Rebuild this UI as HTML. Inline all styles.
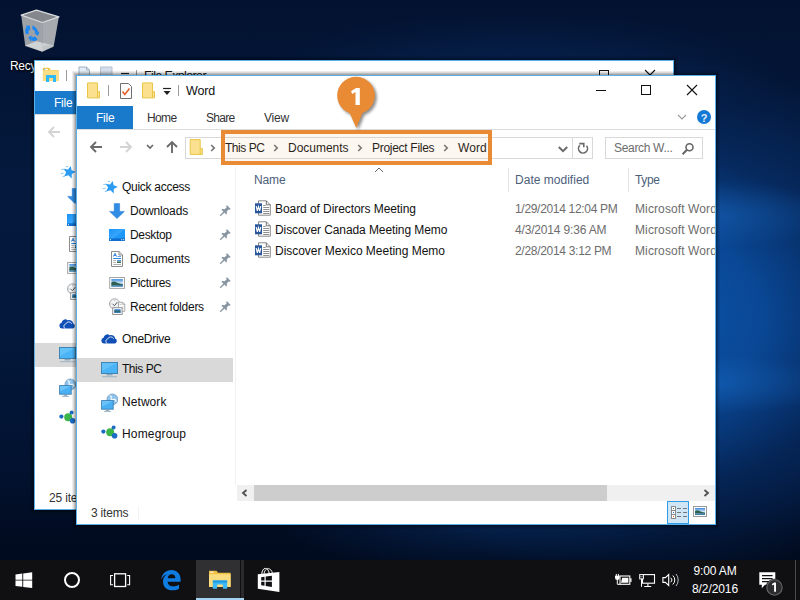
<!DOCTYPE html>
<html><head><meta charset="utf-8">
<style>
*{margin:0;padding:0;box-sizing:border-box}
html,body{width:800px;height:600px;overflow:hidden}
body{position:relative;font-family:"Liberation Sans",sans-serif;font-size:12px;color:#111;background:#03102b}
.abs{position:absolute}
.t{position:absolute;white-space:nowrap;line-height:16px;height:16px}
#bg{position:absolute;left:0;top:0;width:800px;height:600px;
 background:
 radial-gradient(ellipse 260px 60px at 520px 72px, rgba(8,44,98,.55), rgba(8,44,98,0) 100%),
 radial-gradient(ellipse 200px 52px at 480px 520px, rgba(8,44,98,.6), rgba(8,44,98,0) 100%),
 radial-gradient(ellipse 150px 34px at 700px 214px, rgba(30,120,215,.38), rgba(30,120,215,0) 100%),
 radial-gradient(ellipse 150px 30px at 700px 384px, rgba(30,120,215,.34), rgba(30,120,215,0) 100%),
 radial-gradient(ellipse 340px 265px at 640px 318px, rgba(12,88,178,.96) 0%, rgba(11,80,165,.86) 35%, rgba(8,56,124,.5) 65%, rgba(4,24,60,0) 100%),
 linear-gradient(180deg,#031230 0%,#04193d 30%,#03183c 55%,#021230 78%,#010c21 89%,#010a1d 100%);}
.win{position:absolute;background:#fff;border:1px solid #5cb0e9}
</style></head><body>
<div id="bg"></div>
<svg class="abs" style="left:0;top:0" width="0" height="0"><defs><linearGradient id="sky" x1="0" y1="0" x2="0" y2="1"><stop offset="0" stop-color="#3a8ae0"/><stop offset="0.55" stop-color="#dcecf6"/><stop offset="1" stop-color="#dcecf6"/></linearGradient></defs></svg>
<svg class="abs" style="left:18px;top:8px" width="44" height="46" viewBox="18 8 44 46">
 <path d="M21.200 15.200L36.500 10.200 58.900 16.800 42.250 22.500z" fill="#84888d"/>
 <path d="M21.200 15.200L42.250 22.500 42.250 51.800 25.200 46z" fill="#9ea2a7"/>
 <path d="M58.900 16.800L42.250 22.500 42.250 51.800 53.600 46.700z" fill="#a7abaf"/>
 <path d="M25.300 45.600L36.500 41.200 53.500 45.400 42.250 51.500z" fill="#d0d3d5"/>
 <path d="M42.250 46v5.500L53.500 45.400 50 44.600z" fill="#c2c5c8"/>
 <path d="M21.200 15.200L36.500 10.200 58.900 16.800 42.250 22.500z" fill="none" stroke="#d9dbdd" stroke-width="1.300" stroke-linejoin="round"/>
 <path d="M42.250 23v22" stroke="#b4b8bc" stroke-width="0.600"/>
 <g transform="matrix(0.95 0.30 0 1.08 32 33)"><path d="M0.47 -5.38A5.4 5.4 0 0 1 4.97 -2.11" stroke="#1a86f2" stroke-width="3.400" fill="none"/><path d="M6.30 1.02L7.73 -3.28L2.21 -0.94z" fill="#1a86f2"/><path d="M4.42 3.10A5.4 5.4 0 0 1 -0.66 5.36" stroke="#1a86f2" stroke-width="3.400" fill="none"/><path d="M-4.03 4.95L-1.02 8.34L-0.29 2.38z" fill="#1a86f2"/><path d="M-4.89 2.28A5.4 5.4 0 0 1 -4.31 -3.25" stroke="#1a86f2" stroke-width="3.400" fill="none"/><path d="M-2.27 -5.97L-6.71 -5.06L-1.92 -1.44z" fill="#1a86f2"/></g>
</svg>
<div class="t" id="rec" style="left:10px;top:58px;color:#fff;font-size:12px;text-shadow:1px 1px 2px #000,0 0 3px #000;letter-spacing:-0.31px">Recycle Bin</div>

<div class="win" id="bw" style="left:34px;top:60px;width:640px;height:450px;overflow:hidden;box-shadow:0 0 0 1px rgba(0,0,0,.133),0 0 0 2px rgba(0,0,0,.128),0 0 0 3px rgba(0,0,0,.075),0 0 0 4px rgba(0,0,0,.07)">
 <!-- coordinates relative to (35,61) -->
 <svg class="abs" style="left:7px;top:6px" width="18" height="16" viewBox="0 0 18 16"><path d="M0.900 0.800h6.300l1.500 2.200h8.300v10.900h-16.100z" fill="#f2c445"/><path d="M0.900 3.200h16.100v10.700h-16.100z" fill="#fbdd84"/><rect x="2" y="1.900" width="3.800" height="1" fill="#fff"/><rect x="2" y="1.900" width="1" height="1" fill="#35b6f2"/><path d="M4 15v-7h10v7h-3v-3.900h-3.800v3.900z" fill="#2fbaf5"/></svg>
 <div class="abs" style="left:31px;top:9px;width:1px;height:11px;background:#9a9a9a"></div>
 <svg class="abs" style="left:43px;top:5px" width="13" height="18" viewBox="0 0 13 18"><path d="M1 1h7.500l3 3v13h-10.500z" fill="#e4ecf5" stroke="#9fb0c4" stroke-width="1"/><path d="M8.500 1v3h3" fill="none" stroke="#9fb0c4" stroke-width="0.900"/></svg>
 <svg class="abs" style="left:65px;top:5px" width="13" height="18" viewBox="0 0 13 18"><path d="M0.500 1h11.500v16h-11.500z" fill="#d4deea" stroke="#b4c2d2" stroke-width="1"/></svg>
 <svg class="abs" style="left:85px;top:11px" width="10" height="9" viewBox="0 0 10 9"><path d="M1 1.500h8" stroke="#222" stroke-width="1.200"/><path d="M1.500 4h7l-3.500 4z" fill="#222"/></svg>
 <div class="abs" style="left:101px;top:9px;width:1px;height:11px;background:#9a9a9a"></div>
 <div class="t" id="bttl" style="left:109px;top:7px;font-size:12.500px;letter-spacing:-0.63px">File Explorer</div>
 <div class="abs" style="left:564px;top:9px;width:10px;height:10px;border:1px solid #111"></div>
 <svg class="abs" style="left:609px;top:8px" width="12" height="12" viewBox="0 0 12 12"><path d="M1 1l10 10M11 1L1 11" stroke="#111" stroke-width="1.100"/></svg>
 <div class="abs" style="left:0;top:30px;width:56px;height:23px;background:#1979ca"></div>
 <div class="t" id="brt0" style="left:19px;top:34px;color:#fff;letter-spacing:-0.21px">File</div>
 <div class="abs" style="left:0;top:53px;width:638px;height:1px;background:#dadbdc"></div>
 <svg class="abs" style="left:12px;top:64px" width="14" height="14" viewBox="0 0 14 14"><path d="M13 7H2M7 2L2 7l5 5" stroke="#d4d4d4" stroke-width="1.900" fill="none"/></svg>
 <div class="abs" style="left:0;top:282px;width:156px;height:24px;background:#d9d9d9"></div>
 <svg class="abs" style="left:25px;top:104px" width="16" height="14" viewBox="0 0 16 14"><path d="M10.8 0.9L11.6 5.3L15.8 6.8L11.8 8.9L11.7 13.4L8.5 10.3L4.1 11.5L6.1 7.5L3.6 3.8L8.0 4.4z" fill="#2b9cf2"/><path d="M1.300 4.600l3-0.400M0.700 8.700l2.800-0.500M2.600 11.700l2.400-0.800M5.800 1.700l2.400-0.300" stroke="#7cc3f8" stroke-width="0.900"/></svg>
 <svg class="abs" style="left:32px;top:127px" width="16" height="16" viewBox="0 0 16 16"><path d="M5.200 0.400h5.400v8h4.800L8 15.600 0.600 8.400H5.200z" fill="#2f8de6" stroke="#2579cf" stroke-width="0.500"/></svg>
 <svg class="abs" style="left:32px;top:153px" width="17" height="13" viewBox="0 0 17 13"><rect x="0" y="0" width="16" height="12" fill="url(#dg)"/><rect x="0" y="9.400" width="16" height="2.600" fill="#0f6dcf"/><rect x="1" y="10.200" width="1" height="1" fill="#fff"/></svg>
 <svg class="abs" style="left:34px;top:175px" width="13" height="17" viewBox="0 0 13 17"><path d="M0.500 0.500h7.500l3.500 3.500v11.500h-11z" fill="#fff" stroke="#8c8c8c" stroke-width="1"/><path d="M8 0.500v3.500h3.500" fill="none" stroke="#8c8c8c" stroke-width="1"/><path d="M2.300 5.600l1.800-3.400 1.300 3.400M2.800 4.500h2.400" stroke="#2b7fd9" stroke-width="0.900" fill="none"/><path d="M6.500 5.500h3.500" stroke="#4a9be8" stroke-width="0.900"/><path d="M2.200 7.500h7.800" stroke="#2b86e0" stroke-width="1"/><path d="M2.200 9.500h2.600M2.200 11.500h2.600M2.200 13.500h7.800" stroke="#a8a8a8" stroke-width="0.900"/><rect x="6" y="9" width="4" height="1.200" fill="#4a9be8"/><rect x="6" y="10.400" width="4" height="1.600" fill="#3f6f5a"/></svg>
 <svg class="abs" style="left:32px;top:201px" width="17" height="13" viewBox="0 0 17 13"><rect x="0.700" y="0.500" width="14.800" height="10.900" fill="#fff" stroke="#a4a4a4" stroke-width="1"/><rect x="2.300" y="2.100" width="11.600" height="7.700" fill="url(#sky)"/><path d="M2.300 5.600c1.500-1.400 3-1.600 4.500-0.600s4 1.800 7.100 2.100v1.200H2.300z" fill="#2f5f4d"/><path d="M2.300 8.100c4 0.300 8 0 11.600-0.500v2.200H2.300z" fill="#3f7fa8"/></svg>
 <svg class="abs" style="left:32px;top:222px" width="17" height="17" viewBox="0 0 17 17"><circle cx="5.600" cy="5.900" r="5.100" fill="#f1f3f4" stroke="#a3a9ad" stroke-width="1"/><path d="M5.600 1.800v1M5.600 9v1M1.500 5.900h1M8.700 5.900h1" stroke="#8e9498" stroke-width="0.700"/><path d="M3.600 6.200l2 1.400 2.600-3.400" stroke="#4f565a" stroke-width="1" fill="none"/><path d="M9.500 4.300h4.300l2 2v7H9.500z" fill="#fff" stroke="#a0a0a0" stroke-width="0.900"/><path d="M13.700 4.400v2h2" fill="none" stroke="#a0a0a0" stroke-width="0.800"/><path d="M10.600 6.300h2M13.600 8.500h1M13.600 10.500h1" stroke="#a8a8a8" stroke-width="0.800"/><rect x="3.700" y="9.700" width="9.400" height="6.700" fill="#fff" stroke="#8f8f8f" stroke-width="1"/><rect x="5.300" y="11.200" width="6.200" height="3.700" fill="#3a86dc"/><rect x="5.300" y="12.600" width="6.200" height="1.200" fill="#2f5f4d"/><rect x="5.300" y="13.800" width="6.200" height="1.100" fill="#3f7fa8"/></svg>
 <svg class="abs" style="left:24px;top:257px" width="17" height="11" viewBox="0 0 17 11"><path d="M3.200 10.600a3 3 0 0 1-0.600-5.900 3.600 3.600 0 0 1 6-2.400 4 4 0 0 1 5.600 3.200 2.700 2.700 0 0 1-0.400 5.100z" fill="#0f4fb6"/><path d="M6.400 10.600a2.400 2.400 0 0 1 0.300-4.600 3.300 3.300 0 0 1 6-0.300" stroke="#fff" stroke-width="0.800" fill="none"/></svg>
 <svg class="abs" style="left:24px;top:286px" width="17" height="16" viewBox="0 0 17 16"><rect x="0.500" y="0.500" width="16" height="11" fill="#4bb4f6" stroke="#3f86b4" stroke-width="1"/><path d="M1 1h15L1 9z" fill="#6cc6fa" opacity=".7"/><rect x="5.500" y="12" width="6" height="1.400" fill="#8aa7bb"/><rect x="1" y="14.200" width="15" height="1" fill="#9fb4c4"/></svg>
 <svg class="abs" style="left:24px;top:317px" width="17" height="20" viewBox="0 0 17 20"><circle cx="11.400" cy="6.400" r="5.400" fill="#8fc3eb" stroke="#5e8fb8" stroke-width="0.700"/><path d="M8.600 2.600c1.500 0.300 2.200 1.500 1.600 2.600s0.800 1.800 2.400 1.200 2.600 0.600 2.200 2.400" stroke="#e9f4fb" stroke-width="1.300" fill="none"/><rect x="0.600" y="7.600" width="11.600" height="8.600" fill="#49b0f4" stroke="#3b7fb0" stroke-width="0.900"/><path d="M1 8h10.800L1 13.500z" fill="#7acbfb" opacity=".7"/><rect x="4.700" y="16.800" width="3.600" height="1" fill="#7d9cb3"/><rect x="3" y="18" width="7" height="0.900" fill="#9fb4c4"/></svg>
 <svg class="abs" style="left:24px;top:349px" width="17" height="15" viewBox="0 0 17 15"><path d="M9 7l4-4.200M9 7l4.600 3.800" stroke="#1b64b8" stroke-width="1"/><circle cx="2.400" cy="6.600" r="2.100" fill="#1d6cc4"/><circle cx="9.200" cy="7.200" r="4" fill="#3bb54a"/><circle cx="12.600" cy="2.600" r="2" fill="#1d6cc4"/><circle cx="13.600" cy="10.800" r="2.800" fill="#1d6cc4"/></svg>
 <div class="t" id="bst" style="left:14px;top:429px;color:#333;letter-spacing:-0.17px">25 items</div>
</div>

<div class="win" id="fw" style="left:76px;top:75px;width:640px;height:450px;box-shadow:0 0 0 1px rgba(0,0,0,.133),0 0 0 2px rgba(0,0,0,.128),0 0 0 3px rgba(0,0,0,.075),0 0 0 4px rgba(0,0,0,.07)">
 <!-- coordinates inside are relative to (77,76) -->
 <!-- title bar icons -->
 <svg class="abs" style="left:9px;top:5px" width="16" height="20" viewBox="0 0 16 20"><path d="M1.500 1.900H11.500V10.600H13.500V16.900H1.500z" fill="#fbe18f" stroke="#e9c646" stroke-width="1"/><path d="M11.500 10.600V16.900" stroke="#e9c646" stroke-width="1" fill="none"/></svg>
 <div class="abs" style="left:31px;top:9px;width:1px;height:11px;background:#9a9a9a"></div>
 <svg class="abs" style="left:42px;top:6px" width="14" height="18" viewBox="0 0 14 18"><path d="M1.5 1.5h8l3 3v12h-11z" fill="#fdfdfd" stroke="#6f6f6f" stroke-width="1"/><path d="M3.5 9.5l2.3 3 4.7-6" stroke="#e8602c" stroke-width="1.6" fill="none"/></svg>
 <svg class="abs" style="left:64px;top:5px" width="16" height="20" viewBox="0 0 16 20"><path d="M1.500 1.900H11.500V10.600H13.500V16.900H1.500z" fill="#fbe18f" stroke="#e9c646" stroke-width="1"/><path d="M11.500 10.600V16.900" stroke="#e9c646" stroke-width="1" fill="none"/></svg>
 <svg class="abs" style="left:85px;top:11px" width="10" height="9" viewBox="0 0 10 9"><path d="M1 1.5h8" stroke="#222" stroke-width="1.2"/><path d="M1.5 4h7l-3.5 4z" fill="#222"/></svg>
 <div class="abs" style="left:101px;top:9px;width:1px;height:11px;background:#9a9a9a"></div>
 <div class="t" id="ttl" style="left:109px;top:7px;font-size:12.5px;letter-spacing:-0.16px">Word</div>
 <!-- window controls -->
 <div class="abs" style="left:519px;top:14px;width:10px;height:1px;background:#111"></div>
 <div class="abs" style="left:564px;top:9px;width:10px;height:10px;border:1px solid #111"></div>
 <svg class="abs" style="left:609px;top:8px" width="12" height="12" viewBox="0 0 12 12"><path d="M1 1l10 10M11 1L1 11" stroke="#111" stroke-width="1.1"/></svg>
 <!-- ribbon tabs -->
 <div class="abs" style="left:0;top:30px;width:56px;height:23px;background:#1979ca"></div>
 <div class="t" id="rt0" style="left:19px;top:34px;color:#fff;letter-spacing:-0.21px">File</div>
 <div class="t" id="rt1" style="left:70px;top:34px;color:#333;letter-spacing:-0.63px">Home</div>
 <div class="t" id="rt2" style="left:129px;top:34px;color:#333;letter-spacing:-0.71px">Share</div>
 <div class="t" id="rt3" style="left:187px;top:34px;color:#333;letter-spacing:-0.2px">View</div>
 <svg class="abs" style="left:600px;top:38px" width="10" height="7" viewBox="0 0 10 7"><path d="M1 1l4 4 4-4" stroke="#9c9c9c" stroke-width="1.200" fill="none"/></svg>
 <div class="abs" style="left:620px;top:34px;width:14px;height:14px;border-radius:7px;background:#1478d4"></div>
 <div class="t" style="left:620px;top:33.500px;width:14px;text-align:center;color:#e2effb;font-weight:bold;font-size:11px">?</div>
 <div class="abs" style="left:0;top:53px;width:638px;height:1px;background:#dadbdc"></div>
 <!-- nav buttons -->
 <svg class="abs" style="left:12px;top:64px" width="14" height="14" viewBox="0 0 14 14"><path d="M13 7H2M7 2L2 7l5 5" stroke="#6a6a6a" stroke-width="1.900" fill="none"/></svg>
 <svg class="abs" style="left:42px;top:64px" width="14" height="14" viewBox="0 0 14 14"><path d="M1 7h11M7 2l5 5-5 5" stroke="#d4d4d4" stroke-width="1.900" fill="none"/></svg>
 <svg class="abs" style="left:69px;top:68px" width="8" height="6" viewBox="0 0 8 6"><path d="M1 1l3 3 3-3" stroke="#6a6a6a" stroke-width="1.700" fill="none"/></svg>
 <svg class="abs" style="left:88px;top:64px" width="14" height="14" viewBox="0 0 14 14"><path d="M7 13V2M2 7l5-5 5 5" stroke="#6a6a6a" stroke-width="1.900" fill="none"/></svg>
 <!-- address bar -->
 <div class="abs" style="left:108px;top:61px;width:408px;height:22px;border:1px solid #d9d9d9;background:#fff"></div>
 <svg class="abs" style="left:112px;top:62px" width="15" height="18" viewBox="0 0 15 18"><path d="M1.200 1.600H11.200V10.500H13.300V16.400H1.200z" fill="#fbe18f" stroke="#e9c646" stroke-width="1"/><path d="M11.200 10.500V16.400" stroke="#e9c646" stroke-width="1" fill="none"/></svg>
 <svg class="abs ch" style="left:133px;top:68px" width="6" height="8" viewBox="0 0 6 8"><path d="M1.200 1l3 3-3 3" stroke="#727272" stroke-width="1.700" fill="none"/></svg>
 <div class="t" id="a0" style="left:148px;top:64px;letter-spacing:-0.46px">This PC</div>
 <svg class="abs ch" style="left:196px;top:68px" width="6" height="8" viewBox="0 0 6 8"><path d="M1.200 1l3 3-3 3" stroke="#727272" stroke-width="1.700" fill="none"/></svg>
 <div class="t" id="a1" style="left:211px;top:64px;letter-spacing:-0.02px">Documents</div>
 <svg class="abs ch" style="left:280px;top:68px" width="6" height="8" viewBox="0 0 6 8"><path d="M1.200 1l3 3-3 3" stroke="#727272" stroke-width="1.700" fill="none"/></svg>
 <div class="t" id="a2" style="left:295px;top:64px;letter-spacing:-0.29px">Project Files</div>
 <svg class="abs ch" style="left:366px;top:68px" width="6" height="8" viewBox="0 0 6 8"><path d="M1.200 1l3 3-3 3" stroke="#727272" stroke-width="1.700" fill="none"/></svg>
 <div class="t" id="a3" style="left:381px;top:64px;letter-spacing:0.06px">Word</div>
 <svg class="abs" style="left:481px;top:70px" width="10" height="7" viewBox="0 0 10 7"><path d="M0.800 1l4.200 4.200L9.200 1" stroke="#6a6a6a" stroke-width="2" fill="none"/></svg>
 <div class="abs" style="left:495px;top:62px;width:1px;height:20px;background:#d9d9d9"></div>
 <svg class="abs" style="left:500px;top:66px" width="12" height="13" viewBox="0 0 12 13"><path d="M9.500 3.700A4.500 4.500 0 1 1 2.800 3.400" stroke="#6a6a6a" stroke-width="1.600" fill="none"/><path d="M2.300 1.600H6.800V5.200" stroke="#6a6a6a" stroke-width="1.600" fill="none"/></svg>
 <!-- search box -->
 <div class="abs" style="left:528px;top:61px;width:98px;height:22px;border:1px solid #d9d9d9;background:#fff"></div>
 <div class="t" id="srch" style="left:537px;top:64px;color:#6d6d6d;letter-spacing:-0.32px">Search W...</div>
 <svg class="abs" style="left:604px;top:66px" width="14" height="14" viewBox="0 0 14 14"><circle cx="8.500" cy="5.200" r="3.500" stroke="#666" stroke-width="1.600" fill="none"/><path d="M6 7.800L1.600 12.200" stroke="#666" stroke-width="2"/></svg>
 <!-- sidebar : coordinates relative to (77,76) -->
 <div class="abs" style="left:0;top:282px;width:156px;height:24px;background:#d9d9d9"></div>
 <div class="abs" style="left:158px;top:90px;width:1px;height:319px;background:#f2f2f2"></div>
 <!-- quick access star -->
 <svg class="abs" style="left:25px;top:104px" width="16" height="14" viewBox="0 0 16 14"><path d="M10.8 0.9L11.6 5.3L15.8 6.8L11.8 8.9L11.7 13.4L8.5 10.3L4.1 11.5L6.1 7.5L3.6 3.8L8.0 4.4z" fill="#2b9cf2"/><path d="M1.300 4.600l3-0.400M0.700 8.700l2.800-0.500M2.600 11.700l2.400-0.800M5.800 1.700l2.400-0.300" stroke="#7cc3f8" stroke-width="0.900"/></svg>
 <div class="t" id="s0" style="left:45px;top:103px;letter-spacing:-0.28px">Quick access</div>
 <!-- downloads -->
 <svg class="abs" style="left:32px;top:127px" width="16" height="16" viewBox="0 0 16 16"><path d="M5.200 0.400h5.400v8h4.800L8 15.600 0.600 8.400H5.200z" fill="#2f8de6" stroke="#2579cf" stroke-width="0.500"/></svg>
 <div class="t" id="s1" style="left:53px;top:127px;letter-spacing:-0.15px">Downloads</div>
 <!-- desktop -->
 <svg class="abs" style="left:32px;top:153px" width="17" height="13" viewBox="0 0 17 13"><defs><linearGradient id="dg" x1="0" y1="0" x2="1" y2="1"><stop offset="0" stop-color="#1a93f6"/><stop offset="0.5" stop-color="#36a6fb"/><stop offset="0.520" stop-color="#2099f8"/><stop offset="1" stop-color="#1a93f6"/></linearGradient></defs><rect x="0" y="0" width="16" height="12" fill="url(#dg)"/><rect x="0" y="9.400" width="16" height="2.600" fill="#0f6dcf"/><rect x="1" y="10.200" width="1" height="1" fill="#fff"/><rect x="12.200" y="10.200" width="1" height="1" fill="#fff"/><rect x="14.200" y="10.200" width="1" height="1" fill="#fff"/></svg>
 <div class="t" id="s2" style="left:53px;top:151px;letter-spacing:-0.33px">Desktop</div>
 <!-- documents -->
 <svg class="abs" style="left:34px;top:175px" width="13" height="17" viewBox="0 0 13 17"><path d="M0.500 0.500h7.500l3.500 3.500v11.500h-11z" fill="#fff" stroke="#8c8c8c" stroke-width="1"/><path d="M8 0.500v3.500h3.500" fill="none" stroke="#8c8c8c" stroke-width="1"/><path d="M2.300 5.600l1.800-3.400 1.300 3.400M2.800 4.500h2.400" stroke="#2b7fd9" stroke-width="0.900" fill="none"/><path d="M6.500 5.500h3.500" stroke="#4a9be8" stroke-width="0.900"/><path d="M2.200 7.500h7.800" stroke="#2b86e0" stroke-width="1"/><path d="M2.200 9.500h2.600M2.200 11.500h2.600M2.200 13.500h7.800" stroke="#a8a8a8" stroke-width="0.900"/><rect x="6" y="9" width="4" height="1.200" fill="#4a9be8"/><rect x="6" y="10.400" width="4" height="1.600" fill="#3f6f5a"/></svg>
 <div class="t" id="s3" style="left:53px;top:175px;letter-spacing:-0.08px">Documents</div>
 <!-- pictures -->
 <svg class="abs" style="left:32px;top:201px" width="17" height="13" viewBox="0 0 17 13"><rect x="0.700" y="0.500" width="14.800" height="10.900" fill="#fff" stroke="#a4a4a4" stroke-width="1"/><rect x="2.300" y="2.100" width="11.600" height="7.700" fill="url(#sky)"/><path d="M2.300 5.600c1.500-1.400 3-1.600 4.500-0.600s4 1.800 7.100 2.100v1.200H2.300z" fill="#2f5f4d"/><path d="M2.300 8.100c4 0.300 8 0 11.600-0.500v2.200H2.300z" fill="#3f7fa8"/></svg>
 <div class="t" id="s4" style="left:53px;top:199px;letter-spacing:-0.32px">Pictures</div>
 <!-- recent folders -->
 <svg class="abs" style="left:32px;top:222px" width="17" height="17" viewBox="0 0 17 17"><circle cx="5.600" cy="5.900" r="5.100" fill="#f1f3f4" stroke="#a3a9ad" stroke-width="1"/><path d="M5.600 1.800v1M5.600 9v1M1.500 5.900h1M8.700 5.900h1" stroke="#8e9498" stroke-width="0.700"/><path d="M3.600 6.200l2 1.400 2.600-3.400" stroke="#4f565a" stroke-width="1" fill="none"/><path d="M9.500 4.300h4.300l2 2v7H9.500z" fill="#fff" stroke="#a0a0a0" stroke-width="0.900"/><path d="M13.700 4.400v2h2" fill="none" stroke="#a0a0a0" stroke-width="0.800"/><path d="M10.600 6.300h2M13.600 8.500h1M13.600 10.500h1" stroke="#a8a8a8" stroke-width="0.800"/><rect x="3.700" y="9.700" width="9.400" height="6.700" fill="#fff" stroke="#8f8f8f" stroke-width="1"/><rect x="5.300" y="11.200" width="6.200" height="3.700" fill="#3a86dc"/><rect x="5.300" y="12.600" width="6.200" height="1.200" fill="#2f5f4d"/><rect x="5.300" y="13.800" width="6.200" height="1.100" fill="#3f7fa8"/></svg>
 <div class="t" id="s5" style="left:53px;top:223px;letter-spacing:-0.25px">Recent folders</div>
 <!-- pins -->
 <svg class="abs pin" style="left:142px;top:129px" width="12" height="12" viewBox="0 0 12 12"><g transform="translate(5.200 6.800) rotate(45)"><path d="M-2.600 -6.600h5.200v1.500h-1.100v3l1.900 1.700v0.900h-6.800v-0.900l1.900-1.700v-3h-1.100z" fill="#8995a0"/><path d="M0 -0.500V5.600" stroke="#8995a0" stroke-width="1.300"/></g></svg>
 <svg class="abs pin" style="left:142px;top:153px" width="12" height="12" viewBox="0 0 12 12"><g transform="translate(5.200 6.800) rotate(45)"><path d="M-2.600 -6.600h5.200v1.500h-1.100v3l1.900 1.700v0.900h-6.800v-0.900l1.900-1.700v-3h-1.100z" fill="#8995a0"/><path d="M0 -0.500V5.600" stroke="#8995a0" stroke-width="1.300"/></g></svg>
 <svg class="abs pin" style="left:142px;top:177px" width="12" height="12" viewBox="0 0 12 12"><g transform="translate(5.200 6.800) rotate(45)"><path d="M-2.600 -6.600h5.200v1.500h-1.100v3l1.900 1.700v0.900h-6.800v-0.900l1.900-1.700v-3h-1.100z" fill="#8995a0"/><path d="M0 -0.500V5.600" stroke="#8995a0" stroke-width="1.300"/></g></svg>
 <svg class="abs pin" style="left:142px;top:201px" width="12" height="12" viewBox="0 0 12 12"><g transform="translate(5.200 6.800) rotate(45)"><path d="M-2.600 -6.600h5.200v1.500h-1.100v3l1.900 1.700v0.900h-6.800v-0.900l1.900-1.700v-3h-1.100z" fill="#8995a0"/><path d="M0 -0.500V5.600" stroke="#8995a0" stroke-width="1.300"/></g></svg>
 <svg class="abs pin" style="left:142px;top:225px" width="12" height="12" viewBox="0 0 12 12"><g transform="translate(5.200 6.800) rotate(45)"><path d="M-2.600 -6.600h5.200v1.500h-1.100v3l1.900 1.700v0.900h-6.800v-0.900l1.900-1.700v-3h-1.100z" fill="#8995a0"/><path d="M0 -0.500V5.600" stroke="#8995a0" stroke-width="1.300"/></g></svg>
 <!-- onedrive -->
 <svg class="abs" style="left:24px;top:257px" width="17" height="11" viewBox="0 0 17 11"><path d="M3.2 10.6a3 3 0 0 1-0.6-5.9 3.6 3.6 0 0 1 6-2.4 4 4 0 0 1 5.6 3.2 2.7 2.7 0 0 1-0.4 5.1z" fill="#0f4fb6"/><path d="M6.4 10.6a2.4 2.4 0 0 1 0.3-4.6 3.3 3.3 0 0 1 6-0.3" stroke="#fff" stroke-width="0.8" fill="none"/></svg>
 <div class="t" id="s6" style="left:45px;top:255px;letter-spacing:-0.29px">OneDrive</div>
 <!-- this pc -->
 <svg class="abs" style="left:24px;top:286px" width="17" height="16" viewBox="0 0 17 16"><rect x="0.5" y="0.5" width="16" height="11" fill="#4bb4f6" stroke="#3f86b4" stroke-width="1"/><path d="M1 1h15L1 9z" fill="#6cc6fa" opacity=".7"/><rect x="5.5" y="12" width="6" height="1.4" fill="#8aa7bb"/><rect x="1" y="14.2" width="15" height="1" fill="#9fb4c4"/></svg>
 <div class="t" id="s7" style="left:45px;top:285px;letter-spacing:-0.47px">This PC</div>
 <!-- network -->
 <svg class="abs" style="left:24px;top:317px" width="17" height="20" viewBox="0 0 17 20"><circle cx="11.400" cy="6.400" r="5.400" fill="#8fc3eb" stroke="#5e8fb8" stroke-width="0.700"/><path d="M8.600 2.600c1.500 0.300 2.200 1.500 1.600 2.600s0.800 1.800 2.400 1.200 2.600 0.600 2.200 2.400" stroke="#e9f4fb" stroke-width="1.300" fill="none"/><rect x="0.600" y="7.600" width="11.600" height="8.600" fill="#49b0f4" stroke="#3b7fb0" stroke-width="0.900"/><path d="M1 8h10.800L1 13.500z" fill="#7acbfb" opacity=".7"/><rect x="4.700" y="16.800" width="3.600" height="1" fill="#7d9cb3"/><rect x="3" y="18" width="7" height="0.900" fill="#9fb4c4"/></svg>
 <div class="t" id="s8" style="left:45px;top:318px;letter-spacing:0.07px">Network</div>
 <!-- homegroup -->
 <svg class="abs" style="left:24px;top:349px" width="17" height="15" viewBox="0 0 17 15"><path d="M9 7l4-4.2M9 7l4.6 3.8" stroke="#1b64b8" stroke-width="1"/><circle cx="2.4" cy="6.6" r="2.1" fill="#1d6cc4"/><circle cx="9.2" cy="7.2" r="4" fill="#3bb54a"/><circle cx="12.6" cy="2.6" r="2" fill="#1d6cc4"/><circle cx="13.6" cy="10.8" r="2.8" fill="#1d6cc4"/></svg>
 <div class="t" id="s9" style="left:45px;top:350px;letter-spacing:0.16px">Homegroup</div>

 <!-- file list : coordinates relative to (77,76) -->
 <svg class="abs" style="left:297px;top:91px" width="10" height="6" viewBox="0 0 10 6"><path d="M1 5l4-4 4 4" stroke="#666" stroke-width="1" fill="none"/></svg>
 <div class="t" id="h0" style="left:177px;top:96px;color:#4c607a;letter-spacing:-0.15px">Name</div>
 <div class="t" id="h1" style="left:438px;top:96px;color:#4c607a;letter-spacing:0.02px">Date modified</div>
 <div class="t" id="h2" style="left:558px;top:96px;color:#4c607a;letter-spacing:-0.38px">Type</div>
 <div class="abs" style="left:431px;top:92px;width:1px;height:24px;background:#e5e5e5"></div>
 <div class="abs" style="left:551px;top:92px;width:1px;height:24px;background:#e5e5e5"></div>
 <svg class="abs" style="left:177px;top:124px" width="18" height="17" viewBox="0 0 18 17"><path d="M4.500 0.800h7.800l4 4v10.400h-11.800z" fill="#fff" stroke="#8a8a8a" stroke-width="1"/><path d="M12.300 0.800v4h4" fill="none" stroke="#6f6f6f" stroke-width="1"/><path d="M9.200 5.500h2.500M9.200 7.500h6M9.200 9.500h6M9.200 11.500h6M9.200 13.500h6" stroke="#8f8f8f" stroke-width="1"/><rect x="1" y="3.300" width="7" height="10" fill="#2b579a"/><path d="M2.200 6l1.100 4.800 1.200-4.200 1.200 4.200 1.100-4.800" stroke="#fff" stroke-width="1.100" fill="none"/></svg>
 <svg class="abs" style="left:177px;top:145px" width="18" height="17" viewBox="0 0 18 17"><path d="M4.500 0.800h7.800l4 4v10.400h-11.800z" fill="#fff" stroke="#8a8a8a" stroke-width="1"/><path d="M12.300 0.800v4h4" fill="none" stroke="#6f6f6f" stroke-width="1"/><path d="M9.200 5.500h2.500M9.200 7.500h6M9.200 9.500h6M9.200 11.500h6M9.200 13.500h6" stroke="#8f8f8f" stroke-width="1"/><rect x="1" y="3.300" width="7" height="10" fill="#2b579a"/><path d="M2.200 6l1.100 4.800 1.200-4.200 1.200 4.200 1.100-4.800" stroke="#fff" stroke-width="1.100" fill="none"/></svg>
 <svg class="abs" style="left:177px;top:166px" width="18" height="17" viewBox="0 0 18 17"><path d="M4.500 0.800h7.800l4 4v10.400h-11.800z" fill="#fff" stroke="#8a8a8a" stroke-width="1"/><path d="M12.300 0.800v4h4" fill="none" stroke="#6f6f6f" stroke-width="1"/><path d="M9.200 5.500h2.500M9.200 7.500h6M9.200 9.500h6M9.200 11.500h6M9.200 13.500h6" stroke="#8f8f8f" stroke-width="1"/><rect x="1" y="3.300" width="7" height="10" fill="#2b579a"/><path d="M2.200 6l1.100 4.800 1.200-4.200 1.200 4.200 1.100-4.800" stroke="#fff" stroke-width="1.100" fill="none"/></svg>
 <div class="t" id="f0" style="left:198px;top:125px;letter-spacing:-0.07px">Board of Directors Meeting</div>
 <div class="t" id="f1" style="left:198px;top:146px;letter-spacing:-0.09px">Discover Canada Meeting Memo</div>
 <div class="t" id="f2" style="left:198px;top:167px;letter-spacing:-0.03px">Discover Mexico Meeting Memo</div>
 <div class="t" id="d0" style="left:438px;top:125px;color:#6d6d6d;letter-spacing:-0.31px">1/29/2014 12:04 PM</div>
 <div class="t" id="d1" style="left:438px;top:146px;color:#6d6d6d;letter-spacing:-0.17px">4/3/2014 9:36 AM</div>
 <div class="t" id="d2" style="left:438px;top:167px;color:#6d6d6d;letter-spacing:-0.3px">2/28/2014 3:12 PM</div>
 <div class="abs" style="left:558px;top:120px;width:80px;height:70px;overflow:hidden">
  <div class="t" id="y0" style="left:0;top:5px;color:#6d6d6d;letter-spacing:0.11px">Microsoft Word D</div>
  <div class="t" id="y1" style="left:0;top:26px;color:#6d6d6d;letter-spacing:0.11px">Microsoft Word D</div>
  <div class="t" id="y2" style="left:0;top:47px;color:#6d6d6d;letter-spacing:0.11px">Microsoft Word D</div>
 </div>
 <!-- h scrollbar -->
 <div class="abs" style="left:160px;top:409px;width:478px;height:16px;background:#f0f0f0"></div>
 <div class="abs" style="left:177px;top:409px;width:353px;height:16px;background:#cdcdcd"></div>
 <svg class="abs" style="left:164px;top:413px" width="7" height="8" viewBox="0 0 7 8"><path d="M5.5 1L2 4l3.500 3" stroke="#505050" stroke-width="1.8" fill="none"/></svg>
 <svg class="abs" style="left:626px;top:413px" width="7" height="8" viewBox="0 0 7 8"><path d="M1.5 1L5 4 1.500 7" stroke="#505050" stroke-width="1.8" fill="none"/></svg>
 <!-- status bar -->
 <div class="t" id="st" style="left:14px;top:429px;color:#333;letter-spacing:-0.2px">3 items</div>
 <div class="abs" style="left:61px;top:430px;width:1px;height:14px;background:#f2f2f2"></div>
 <div class="abs" style="left:590px;top:425px;width:22px;height:23px;background:#cfe6f7;border:1px solid #2f9ce4"></div>
 <svg class="abs" style="left:594px;top:430px" width="17" height="13" viewBox="0 0 17 13"><rect x="0.5" y="0.5" width="4" height="12" fill="#fff" stroke="#8a8a8a" stroke-width="1"/><path d="M0.500 4.500h4M0.500 8.500h4" stroke="#8a8a8a" stroke-width="1"/><rect x="2" y="2" width="1" height="1" fill="#3a8a5a"/><rect x="2" y="6" width="1" height="1" fill="#2b7fe0"/><rect x="2" y="10" width="1" height="1" fill="#e05a2b"/><path d="M6 2.500h4M12 2.500h4M6 6.500h4M12 6.500h4M6 10.500h4M12 10.500h4" stroke="#777" stroke-width="1"/></svg>
 <svg class="abs" style="left:616px;top:430px" width="14" height="11" viewBox="0 0 14 11"><rect x="0.500" y="0.500" width="13" height="10" fill="#fff" stroke="#9a9a9a" stroke-width="1"/><rect x="2" y="2" width="10" height="7" fill="url(#sky)"/><path d="M2 5.200c1.500-1.200 2.800-1.200 4-0.400s3.500 1.500 6 1.700v1H2z" fill="#2f5f4d"/><path d="M2 7.400c3.500 0.300 7 0 10-0.400v2H2z" fill="#3f7fa8"/></svg>

 <!--STATUS-->
</div>

<div class="abs" style="left:221px;top:130px;width:271px;height:35px;border:4px solid #e98a35;background:rgba(240,180,120,.10)"></div>
<svg class="abs" style="left:330px;top:72px;overflow:visible" width="52" height="62" viewBox="330 72 52 62">
 <defs><filter id="cs" x="-30%" y="-30%" width="160%" height="160%"><feGaussianBlur stdDeviation="1.400"/></filter></defs>
 <g fill="#000" opacity=".45" filter="url(#cs)" transform="translate(2,2)"><circle cx="356" cy="95.500" r="18.800"/><path d="M349.600 112.500L356.300 128 362.600 112.500z"/></g>
 <circle cx="356" cy="95.500" r="18.800" fill="#e98a35"/><path d="M349.600 112.800L356.300 128 362.600 112.800z" fill="#e98a35"/>
 <path d="M359.800 88h-3.700l-5.100 3.300 1.300 2.600 3.200-1.900v12.900h4.300z" fill="#fff"/>
</svg>

<div class="abs" id="tb" style="left:0;top:560px;width:800px;height:40px;background:#101012">
 <!-- coords relative to (0,560) -->
 <svg class="abs" style="left:15px;top:12px" width="18" height="17" viewBox="0 0 18 17"><path d="M0.500 2.400L7.300 1.500v6.200H0.500zM8.200 1.400L17.200 0.200v7.500H8.200zM0.500 8.600h6.800v6.200L0.500 13.900zM8.200 8.600h9v7.500l-9-1.200z" fill="#fff"/></svg>
 <div class="abs" style="left:64.100px;top:12.400px;width:15.600px;height:15.600px;border-radius:8px;border:2.100px solid #fff"></div>
 <svg class="abs" style="left:109px;top:12px" width="22" height="16" viewBox="0 0 22 16"><rect x="5.600" y="1.800" width="11" height="12.700" fill="none" stroke="#fff" stroke-width="1.300"/><path d="M4 3.500H1.600v9.200H4M18.200 3.500h2.400v9.200h-2.400" stroke="#fff" stroke-width="1.100" fill="none"/></svg>
 <svg class="abs" style="left:160px;top:8.500px" width="22" height="22" viewBox="0 0 22 22"><path d="M1.200 10.200C2 4.600 6.200 1 11.400 1c5.600 0 9.200 4 9.200 9.600v2.200H7.600c0.200 3 2.400 4.600 5.400 4.600 2.200 0 4.200-0.600 6-1.700v4.100c-1.900 1-4.200 1.500-6.700 1.500-5.500 0-9.300-3.400-9.300-8.800 0-3 1.400-5.700 4-7.300-1.700 0.300-4.300 1.800-5.800 5zM7.700 9.200h7.700c0-2.400-1.400-4-3.700-4-2.200 0-3.700 1.600-4 4z" fill="#0f7ce2"/></svg>
 <div class="abs" style="left:196px;top:0;width:44px;height:40px;background:#303033"></div>
 <div class="abs" style="left:241px;top:0;width:3px;height:40px;background:#2a2a2d"></div>
 <div class="abs" style="left:196px;top:38px;width:48px;height:2px;background:#a5d3f5"></div>
 <svg class="abs" style="left:208px;top:10px" width="24" height="20" viewBox="0 0 24 20"><path d="M1 0.800h7.500l1.500 2h12.600v14.200h-21.600z" fill="#efc041"/><path d="M1 4.200h21.600v12.800h-21.600z" fill="#fbdc7e"/><rect x="2.200" y="1.700" width="3.400" height="1" fill="#fff" opacity=".9"/><path d="M4.800 18.800v-8.400h14.400v8.400h-4.400v-4.300h-5.600v4.300z" fill="#3dbaf5"/><path d="M4.800 10.400h14.400v2.200h-14.400z" fill="#1d9ae2"/><rect x="9.200" y="17" width="5.600" height="1.900" fill="#303033"/></svg>
 <svg class="abs" style="left:257px;top:7px" width="23" height="26" viewBox="0 0 23 26"><path d="M4.800 7.200c0-3 1.500-5.800 3.500-5.800s3.400 2 3.800 4.600" stroke="#fff" stroke-width="1" fill="none"/><path d="M7 7c0.200-2.800 1.900-5.400 4.100-5.400s3.900 2.200 4.300 4.600" stroke="#e8e8e8" stroke-width="1" fill="none"/><path d="M0.800 7.200L22.400 4.900V25L0.800 21.700z" fill="#fff"/><path d="M4.200 10.300l3.300-0.500v3.800h-3.300zM8.700 9.600l6.200-0.900v4.900h-6.200zM4.200 14.800h3.300v4l-3.300-0.500zM8.700 14.800h6.200v5.200l-6.200-1z" fill="#101012"/></svg>
 <!-- tray -->
 <svg class="abs" style="left:614px;top:13px" width="19" height="13" viewBox="0 0 19 13"><path d="M2.300 0.900V3M4.400 0.900V3" stroke="#fff" stroke-width="1"/><path d="M1 2.800h4.600v2a2.300 2.300 0 0 1-4.600 0z" fill="#fff"/><path d="M3.300 6.800V11.300H6" stroke="#fff" stroke-width="1" fill="none"/><rect x="6" y="3" width="9.800" height="8.300" fill="none" stroke="#fff" stroke-width="1.100"/><rect x="16.200" y="5.200" width="1.300" height="3.800" fill="#fff"/><path d="M8.200 4.700H14.400V9.700H7z" fill="#fff"/></svg>
 <svg class="abs" style="left:639px;top:13px" width="17" height="15" viewBox="0 0 17 15"><rect x="3.500" y="1.600" width="12" height="8.600" fill="none" stroke="#fff" stroke-width="1.100"/><path d="M8.900 10.500V13.500M5.200 13.500H12.200" stroke="#fff" stroke-width="1.100"/><rect x="0.700" y="1.600" width="3.700" height="4.300" fill="#101012" stroke="#fff" stroke-width="1"/><path d="M2.500 6V13.800" stroke="#fff" stroke-width="1"/><path d="M1.700 3.300l0.800 0.900 0.800-0.900" stroke="#fff" stroke-width="0.800" fill="none"/></svg>
 <svg class="abs" style="left:662px;top:13px" width="18" height="15" viewBox="0 0 18 15"><path d="M0.900 4.600H3.400L6.700 1.500V12.500L3.400 9.400H0.900z" fill="none" stroke="#fff" stroke-width="1.100"/><path d="M8.81 4.77A3.0 3.0 0 0 1 8.81 9.23" stroke="#fff" stroke-width="1" fill="none"/><path d="M10.81 2.54A6.0 6.0 0 0 1 10.81 11.46" stroke="#fff" stroke-width="1" fill="none"/><path d="M14.00 0.96A9.4 9.4 0 0 1 14.00 13.04" stroke="#b4bdc8" stroke-width="1" fill="none"/></svg>
 <div class="t" id="tm" style="left:680px;top:3px;width:70px;text-align:center;color:#fff;letter-spacing:-0.15px">9:00 AM</div>
 <div class="t" id="dt" style="left:680px;top:21px;width:70px;text-align:center;color:#fff;letter-spacing:-0.09px">8/2/2016</div>
 <svg class="abs" style="left:758px;top:11px" width="26" height="26" viewBox="0 0 26 26"><path d="M1.300 1.200h16v12.600h-10.300l-3.200 3.400v-3.400h-2.500z" fill="#fff"/><path d="M4 4.700h10.600M4 7.700h10.600M4 10.700h7" stroke="#101012" stroke-width="1.200"/><circle cx="16.500" cy="16.500" r="8.800" fill="#101012"/><circle cx="16.500" cy="16.500" r="7.700" fill="#2c2c2f" stroke="#66666a" stroke-width="1.100"/><path d="M18 11.400h-1.700l-2.500 1.600 0.800 1.400 1.500-0.900v7.300h1.900z" fill="#fff"/></svg>
 <div class="abs" style="left:795px;top:0;width:1px;height:40px;background:#4a4a4d"></div>
</div>

</body></html>
